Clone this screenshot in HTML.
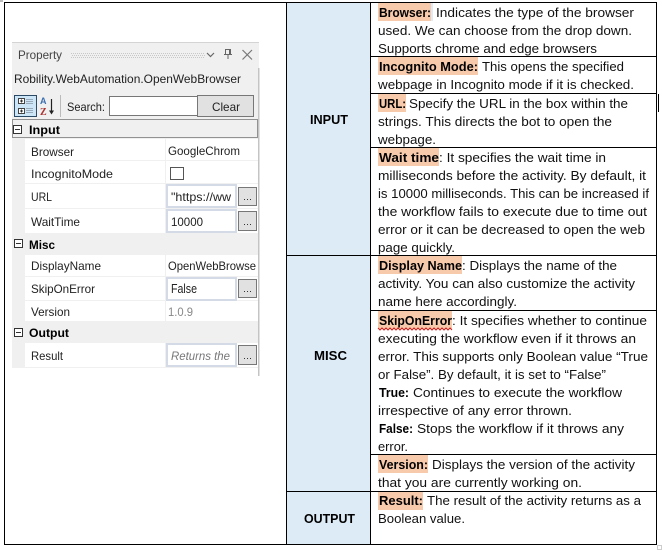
<!DOCTYPE html>
<html><head><meta charset="utf-8"><style>
html,body{margin:0;padding:0;background:#fff;width:662px;height:550px;overflow:hidden}
svg{display:block;font-family:"Liberation Sans",sans-serif}
.t text{font-size:13px;fill:#111}
.t .b{font-weight:bold;fill:#000}
.p text{font-size:12px;fill:#222}
.p .c{font-weight:bold;fill:#000}
</style></head><body>
<svg width="662" height="550" viewBox="0 0 662 550" xmlns="http://www.w3.org/2000/svg">
<rect width="662" height="550" fill="#fff"/>
<rect x="0" y="0" width="3" height="2" fill="#bbb"/>
<rect x="287" y="3" width="83" height="541" fill="#ddebf7"/>
<g fill="#f7caac">
<rect x="378" y="3" width="53" height="18"/><rect x="378" y="57" width="100" height="18"/><rect x="378" y="94" width="28" height="18"/><rect x="378" y="148" width="61" height="18"/><rect x="378" y="256" width="84" height="18"/><rect x="378" y="311" width="74" height="18"/><rect x="378" y="455" width="50" height="18"/><rect x="378" y="492" width="45" height="18"/>
</g>
<rect x="431" y="3" width="2" height="18" fill="#ddebf7"/>
<g fill="#000">
<rect x="4" y="2" width="653" height="1"/><rect x="4" y="544" width="653" height="1"/>
<rect x="4" y="2" width="1" height="543"/><rect x="286" y="2" width="1" height="543"/><rect x="370" y="2" width="1" height="543"/><rect x="656" y="2" width="1" height="543"/>
<rect x="370" y="56" width="287" height="1"/><rect x="370" y="93" width="287" height="1"/><rect x="370" y="147" width="287" height="1"/>
<rect x="286" y="255" width="371" height="1"/><rect x="370" y="310" width="287" height="1"/><rect x="370" y="454" width="287" height="1"/><rect x="286" y="491" width="371" height="1"/>
<rect x="658" y="94" width="1" height="18"/>
</g>
<rect x="657.5" y="545.5" width="4" height="4" fill="#fff" stroke="#ccc"/>
<g class="t">
<text class="b" x="310" y="124" textLength="38" lengthAdjust="spacingAndGlyphs">INPUT</text>
<text class="b" x="314" y="360" textLength="33" lengthAdjust="spacingAndGlyphs">MISC</text>
<text class="b" x="304" y="523" textLength="51" lengthAdjust="spacingAndGlyphs">OUTPUT</text>

<text class="b" x="379" y="17" textLength="52" lengthAdjust="spacingAndGlyphs">Browser:</text>
<text x="436" y="17" textLength="198" lengthAdjust="spacingAndGlyphs">Indicates the type of the browser</text>
<text x="378" y="35" textLength="254" lengthAdjust="spacingAndGlyphs">used. We can choose from the drop down.</text>
<text x="378" y="53" textLength="219" lengthAdjust="spacingAndGlyphs">Supports chrome and edge browsers</text>

<text class="b" x="379" y="71" textLength="99" lengthAdjust="spacingAndGlyphs">Incognito Mode:</text>
<text x="482" y="71" textLength="142" lengthAdjust="spacingAndGlyphs">This opens the specified</text>
<text x="378" y="89" textLength="256" lengthAdjust="spacingAndGlyphs">webpage in Incognito mode if it is checked.</text>

<text class="b" x="379" y="108" textLength="27" lengthAdjust="spacingAndGlyphs">URL:</text>
<text x="409" y="108" textLength="219" lengthAdjust="spacingAndGlyphs">Specify the URL in the box within the</text>
<text x="378" y="126" textLength="234" lengthAdjust="spacingAndGlyphs">strings. This directs the bot to open the</text>
<text x="378" y="144" textLength="58" lengthAdjust="spacingAndGlyphs">webpage.</text>

<text class="b" x="379" y="162" textLength="60" lengthAdjust="spacingAndGlyphs">Wait time</text>
<text x="439" y="162" textLength="167" lengthAdjust="spacingAndGlyphs">: It specifies the wait time in</text>
<text x="378" y="180" textLength="268" lengthAdjust="spacingAndGlyphs">milliseconds before the activity. By default, it</text>
<text x="378" y="198" textLength="271" lengthAdjust="spacingAndGlyphs">is 10000 milliseconds. This can be increased if</text>
<text x="378" y="216" textLength="269" lengthAdjust="spacingAndGlyphs">the workflow fails to execute due to time out</text>
<text x="378" y="234" textLength="267" lengthAdjust="spacingAndGlyphs">error or it can be decreased to open the web</text>
<text x="378" y="252" textLength="77" lengthAdjust="spacingAndGlyphs">page quickly.</text>

<text class="b" x="379" y="270" textLength="83" lengthAdjust="spacingAndGlyphs">Display Name</text>
<text x="462" y="270" textLength="155" lengthAdjust="spacingAndGlyphs">: Displays the name of the</text>
<text x="378" y="288" textLength="257" lengthAdjust="spacingAndGlyphs">activity. You can also customize the activity</text>
<text x="378" y="306" textLength="139" lengthAdjust="spacingAndGlyphs">name here accordingly.</text>

<text class="b" x="379" y="325" textLength="73" lengthAdjust="spacingAndGlyphs">SkipOnError</text>
<text x="452" y="325" textLength="195" lengthAdjust="spacingAndGlyphs">: It specifies whether to continue</text>
<polyline points="378,328 380,330 382,328 384,330 386,328 388,330 390,328 392,330 394,328 396,330 398,328 400,330 402,328 404,330 406,328 408,330 410,328 412,330 414,328 416,330 418,328 420,330 422,328 424,330 426,328 428,330 430,328 432,330 434,328 436,330 438,328 440,330 442,328 444,330 446,328 448,330 450,328 452,330" fill="none" stroke="#d02020" stroke-width="1"/>
<text x="378" y="343" textLength="258" lengthAdjust="spacingAndGlyphs">executing the workflow even if it throws an</text>
<text x="378" y="361" textLength="270" lengthAdjust="spacingAndGlyphs">error. This supports only Boolean value “True</text>
<text x="378" y="379" textLength="228" lengthAdjust="spacingAndGlyphs">or False”. By default, it is set to “False”</text>
<text class="b" x="379" y="397" textLength="30" lengthAdjust="spacingAndGlyphs">True:</text>
<text x="413" y="397" textLength="209" lengthAdjust="spacingAndGlyphs">Continues to execute the workflow</text>
<text x="378" y="415" textLength="194" lengthAdjust="spacingAndGlyphs">irrespective of any error thrown.</text>
<text class="b" x="379" y="433" textLength="34" lengthAdjust="spacingAndGlyphs">False:</text>
<text x="417" y="433" textLength="207" lengthAdjust="spacingAndGlyphs">Stops the workflow if it throws any</text>
<text x="378" y="451" textLength="30" lengthAdjust="spacingAndGlyphs">error.</text>

<text class="b" x="379" y="469" textLength="49" lengthAdjust="spacingAndGlyphs">Version:</text>
<text x="432" y="469" textLength="203" lengthAdjust="spacingAndGlyphs">Displays the version of the activity</text>
<text x="378" y="487" textLength="204" lengthAdjust="spacingAndGlyphs">that you are currently working on.</text>

<text class="b" x="379" y="505" textLength="44" lengthAdjust="spacingAndGlyphs">Result:</text>
<text x="427" y="505" textLength="214" lengthAdjust="spacingAndGlyphs">The result of the activity returns as a</text>
<text x="378" y="523" textLength="87" lengthAdjust="spacingAndGlyphs">Boolean value.</text>
</g>

<!-- property panel -->
<g class="p">
<rect x="12" y="43" width="247" height="325" fill="#f0f0f0"/>
<rect x="12" y="42" width="247" height="1" fill="#d4d4d4"/>
<rect x="258" y="68" width="1.5" height="308" fill="#c4c4c4"/>
<text x="18" y="59" textLength="44" lengthAdjust="spacingAndGlyphs" style="fill:#444">Property</text>
<line x1="71" y1="53.500" x2="205" y2="53.500" stroke="#c8c8c8" stroke-dasharray="1 1"/>
<line x1="72" y1="55.500" x2="205" y2="55.500" stroke="#c8c8c8" stroke-dasharray="1 1"/>
<line x1="71" y1="57.500" x2="205" y2="57.500" stroke="#c8c8c8" stroke-dasharray="1 1"/>
<path d="M207 53l3.500 3.500 3.500-3.500" fill="none" stroke="#666" stroke-width="1.200"/>
<path d="M225.500 49.500h5v5h-5zM224 54.500h8M228 54.500v4.500M229.500 50v4.500" fill="none" stroke="#666"/>
<path d="M242.500 50l9.500 9.500M252 50l-9.500 9.500" fill="none" stroke="#777" stroke-width="1.200"/>

<text x="14" y="83" textLength="227" lengthAdjust="spacingAndGlyphs" style="fill:#222">Robility.WebAutomation.OpenWebBrowser</text>

<rect x="14.500" y="95.500" width="22" height="21" fill="#cde6f7" stroke="#2b4a66"/>
<path d="M18.500 98.500h6v5h-6zM18.500 108.500h6v5h-6z" fill="#fff" stroke="#444"/>
<path d="M20 101h3M20 111h3M21.500 99.500v3M21.500 109.500v3" stroke="#333"/>
<path d="M26 99.500h7M26 101.500h7M26 103.500h7M26 108.500h7M26 110.500h7M26 112.500h7" stroke="#9ab"/>
<text x="40" y="104" style="font-size:9px;font-weight:bold;fill:#3a6fb0">A</text>
<text x="40" y="115" style="font-size:10px;font-weight:bold;font-family:'Liberation Serif',serif;fill:#a33">Z</text>
<path d="M51.500 99v13" stroke="#222" stroke-width="1.200"/><path d="M49 110.500h5l-2.500 4z" fill="#222"/>
<rect x="60" y="95" width="1" height="22" fill="#bbb"/>
<text x="67" y="111" textLength="38" lengthAdjust="spacingAndGlyphs" style="fill:#222">Search:</text>
<rect x="109.500" y="96.500" width="88" height="19" fill="#fff" stroke="#777"/>
<rect x="197.500" y="95.500" width="56" height="21" fill="#e1e1e1" stroke="#777"/>
<text x="212" y="111" textLength="28" lengthAdjust="spacingAndGlyphs" style="fill:#222">Clear</text>

<!-- rows -->
<g fill="#fff">
<rect x="25" y="139" width="233" height="21"/><rect x="25" y="161" width="233" height="22"/><rect x="25" y="184" width="233" height="24"/><rect x="25" y="209" width="233" height="24"/>
<rect x="25" y="255" width="233" height="21"/><rect x="25" y="277" width="233" height="23"/><rect x="25" y="301" width="233" height="20"/>
<rect x="25" y="343" width="233" height="24"/>
</g>
<g fill="#f0f0f0"><rect x="165" y="139" width="1" height="94"/><rect x="165" y="255" width="1" height="66"/><rect x="165" y="343" width="1" height="24"/></g>
<rect x="12.500" y="119.500" width="245" height="18" fill="#f0f0f0" stroke="#333" stroke-dasharray="1 1"/>

<g fill="#fff" stroke="#333"><rect x="13.500" y="125.500" width="8" height="8"/><rect x="14.500" y="239.500" width="8" height="8"/><rect x="14.500" y="328.500" width="8" height="8"/></g>
<path d="M15 129.500h5M16 243.500h5M16 332.500h5" stroke="#333"/>
<text class="c" x="29" y="134" textLength="31" lengthAdjust="spacingAndGlyphs">Input</text>
<text class="c" x="29" y="249" textLength="26" lengthAdjust="spacingAndGlyphs">Misc</text>
<text class="c" x="29" y="337" textLength="40" lengthAdjust="spacingAndGlyphs">Output</text>

<text x="31" y="156" textLength="43" lengthAdjust="spacingAndGlyphs">Browser</text>
<text x="31" y="178" textLength="82" lengthAdjust="spacingAndGlyphs">IncognitoMode</text>
<text x="31" y="201" textLength="21" lengthAdjust="spacingAndGlyphs">URL</text>
<text x="31" y="226" textLength="49" lengthAdjust="spacingAndGlyphs">WaitTime</text>
<text x="31" y="270" textLength="70" lengthAdjust="spacingAndGlyphs">DisplayName</text>
<text x="31" y="293" textLength="64" lengthAdjust="spacingAndGlyphs">SkipOnError</text>
<text x="31" y="316" textLength="39" lengthAdjust="spacingAndGlyphs">Version</text>
<text x="31" y="360" textLength="32" lengthAdjust="spacingAndGlyphs">Result</text>

<text x="168" y="155" textLength="72" lengthAdjust="spacingAndGlyphs">GoogleChrom</text>
<rect x="170.500" y="167.500" width="13" height="12" fill="#fff" stroke="#555"/>
<text x="168" y="270" textLength="88" lengthAdjust="spacingAndGlyphs">OpenWebBrowse</text>
<text x="168" y="316" textLength="25" lengthAdjust="spacingAndGlyphs" style="fill:#888">1.0.9</text>

<g fill="#fff" stroke="#d5dbe6" stroke-width="2">
<rect x="167" y="185" width="69" height="22"/><rect x="167" y="210" width="69" height="22"/><rect x="167" y="278" width="69" height="22"/><rect x="167" y="344" width="69" height="22"/>
</g>
<text x="171" y="201" textLength="60" lengthAdjust="spacingAndGlyphs">"https://ww</text>
<text x="171" y="226" textLength="32" lengthAdjust="spacingAndGlyphs">10000</text>
<text x="171" y="293" textLength="26" lengthAdjust="spacingAndGlyphs" style="font-size:12.500px">False</text>
<text x="171" y="360" textLength="59" lengthAdjust="spacingAndGlyphs" style="font-style:italic;fill:#777">Returns the</text>

<g fill="#e1e1e1" stroke="#777">
<rect x="238.500" y="187.500" width="18" height="18"/><rect x="238.500" y="211.500" width="18" height="19"/><rect x="238.500" y="279.500" width="18" height="18"/><rect x="238.500" y="345.500" width="18" height="19"/>
</g>
<g fill="#333">
<path d="M244 199h1v1h-1zM247 199h1v1h-1zM250 199h1v1h-1z"/>
<path d="M244 224h1v1h-1zM247 224h1v1h-1zM250 224h1v1h-1z"/>
<path d="M244 291h1v1h-1zM247 291h1v1h-1zM250 291h1v1h-1z"/>
<path d="M244 358h1v1h-1zM247 358h1v1h-1zM250 358h1v1h-1z"/>
</g>
</g>
</svg>
</body></html>
